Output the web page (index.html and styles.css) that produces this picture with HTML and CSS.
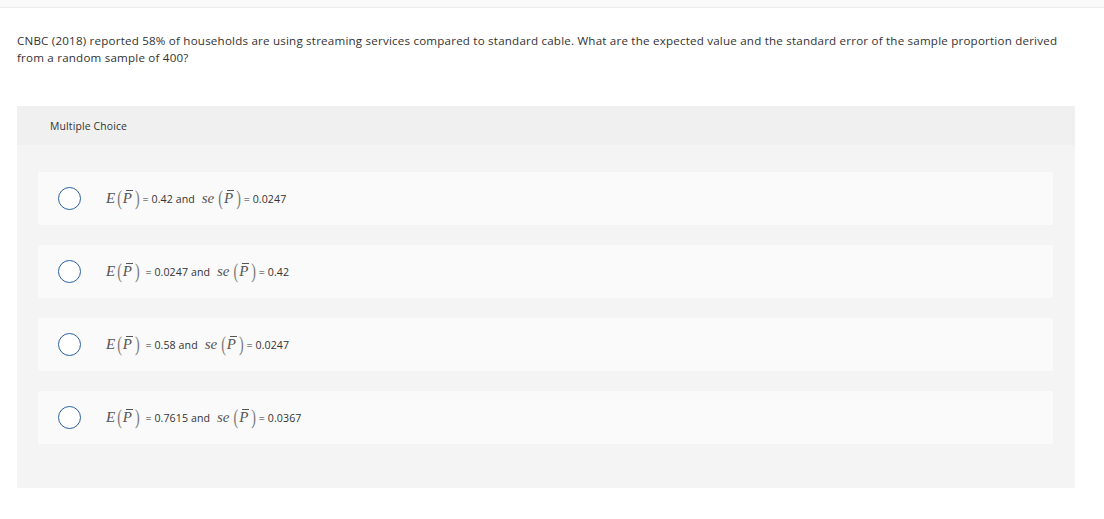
FILE: index.html
```html
<!DOCTYPE html>
<html>
<head>
<meta charset="utf-8">
<link rel="stylesheet" href="styles.css">
</head>
<body>
<div class="topbar"></div>
<main class="content">
  <p class="question">CNBC (2018) reported 58% of households are using streaming services compared to standard cable. What are the expected value and the standard error of the sample proportion derived from a random sample of 400?</p>
  <section class="panel">
    <div class="panel-head">Multiple Choice</div>
    <div class="panel-body">
      <div class="option">
        <span class="radio"></span>
        <span class="answer"><span class="m"><i class="mi">E</i><span class="paren">(</span><i class="mi bar">P</i><span class="paren">)</span></span> = 0.42 and <span class="m se"><i class="mi">se</i><span class="paren sp">(</span><i class="mi bar">P</i><span class="paren">)</span></span> = 0.0247</span>
      </div>
      <div class="option">
        <span class="radio"></span>
        <span class="answer"><span class="m"><i class="mi">E</i><span class="paren">(</span><i class="mi bar">P</i><span class="paren">)</span></span>&nbsp; = 0.0247 and <span class="m se"><i class="mi">se</i><span class="paren sp">(</span><i class="mi bar">P</i><span class="paren">)</span></span> = 0.42</span>
      </div>
      <div class="option">
        <span class="radio"></span>
        <span class="answer"><span class="m"><i class="mi">E</i><span class="paren">(</span><i class="mi bar">P</i><span class="paren">)</span></span>&nbsp; = 0.58 and <span class="m se"><i class="mi">se</i><span class="paren sp">(</span><i class="mi bar">P</i><span class="paren">)</span></span> = 0.0247</span>
      </div>
      <div class="option">
        <span class="radio"></span>
        <span class="answer"><span class="m"><i class="mi">E</i><span class="paren">(</span><i class="mi bar">P</i><span class="paren">)</span></span>&nbsp; = 0.7615 and <span class="m se"><i class="mi">se</i><span class="paren sp">(</span><i class="mi bar">P</i><span class="paren">)</span></span> = 0.0367</span>
      </div>
    </div>
  </section>
</main>
</body>
</html>
```
FILE: styles.css
```css
* { box-sizing: border-box; }
html, body { margin: 0; padding: 0; background: #fff; }
body {
  font-family: "Open Sans", "Liberation Sans", sans-serif;
  color: #333;
  width: 1104px;
}
.topbar {
  height: 8px;
  background: #fafafa;
  border-bottom: 1px solid #ececec;
}
.content {
  padding: 0 29px 0 17px;
}
.question {
  margin: 24px 0 0;
  font-size: 11.6px;
  letter-spacing: 0.2px;
  line-height: 17px;
  color: #333;
}
.panel {
  margin-top: 40px;
  background: #f4f4f4;
  border-radius: 2px;
}
.panel-head {
  height: 39px;
  display: flex;
  align-items: center;
  padding-left: 33px;
  background: #f0f0f0;
  font-size: 10.4px;
  letter-spacing: 0.15px;
  color: #333;
}
.panel-body {
  padding: 27px 22px 44px 21px;
  display: flex;
  flex-direction: column;
  gap: 20px;
}
.option {
  height: 53px;
  background: #fafafa;
  border-radius: 2px;
  display: flex;
  align-items: center;
  padding-left: 20px;
}
.radio {
  width: 23px;
  height: 23px;
  border-radius: 50%;
  border: 1.6px solid #2a5f9e;
  background: #fff;
  flex: none;
  margin-right: 25px;
}
.answer {
  font-size: 10.6px;
  letter-spacing: 0.1px;
  color: #333;
  display: flex;
  align-items: center;
  white-space: pre;
}
.m {
  display: inline-flex;
  align-items: center;
  font-family: "Liberation Serif", "DejaVu Serif", serif;
  color: #555;
  font-size: 15px;
  letter-spacing: 0;
}
.se { margin-left: 4px; }
.mi {
  font-style: italic;
}
.paren {
  font-family: "Liberation Serif", serif;
  font-size: 14px;
  line-height: 1;
  display: inline-block;
  transform: scale(1, 1.5);
  margin: 0 0 0 2px;
  color: #777;
}
.paren.sp { margin-left: 4px; }
.bar {
  position: relative;
  padding: 0 1px;
}
.bar::before {
  content: "";
  position: absolute;
  left: 4px;
  right: 0;
  top: 0;
  border-top: 1px solid #555;
}
```
